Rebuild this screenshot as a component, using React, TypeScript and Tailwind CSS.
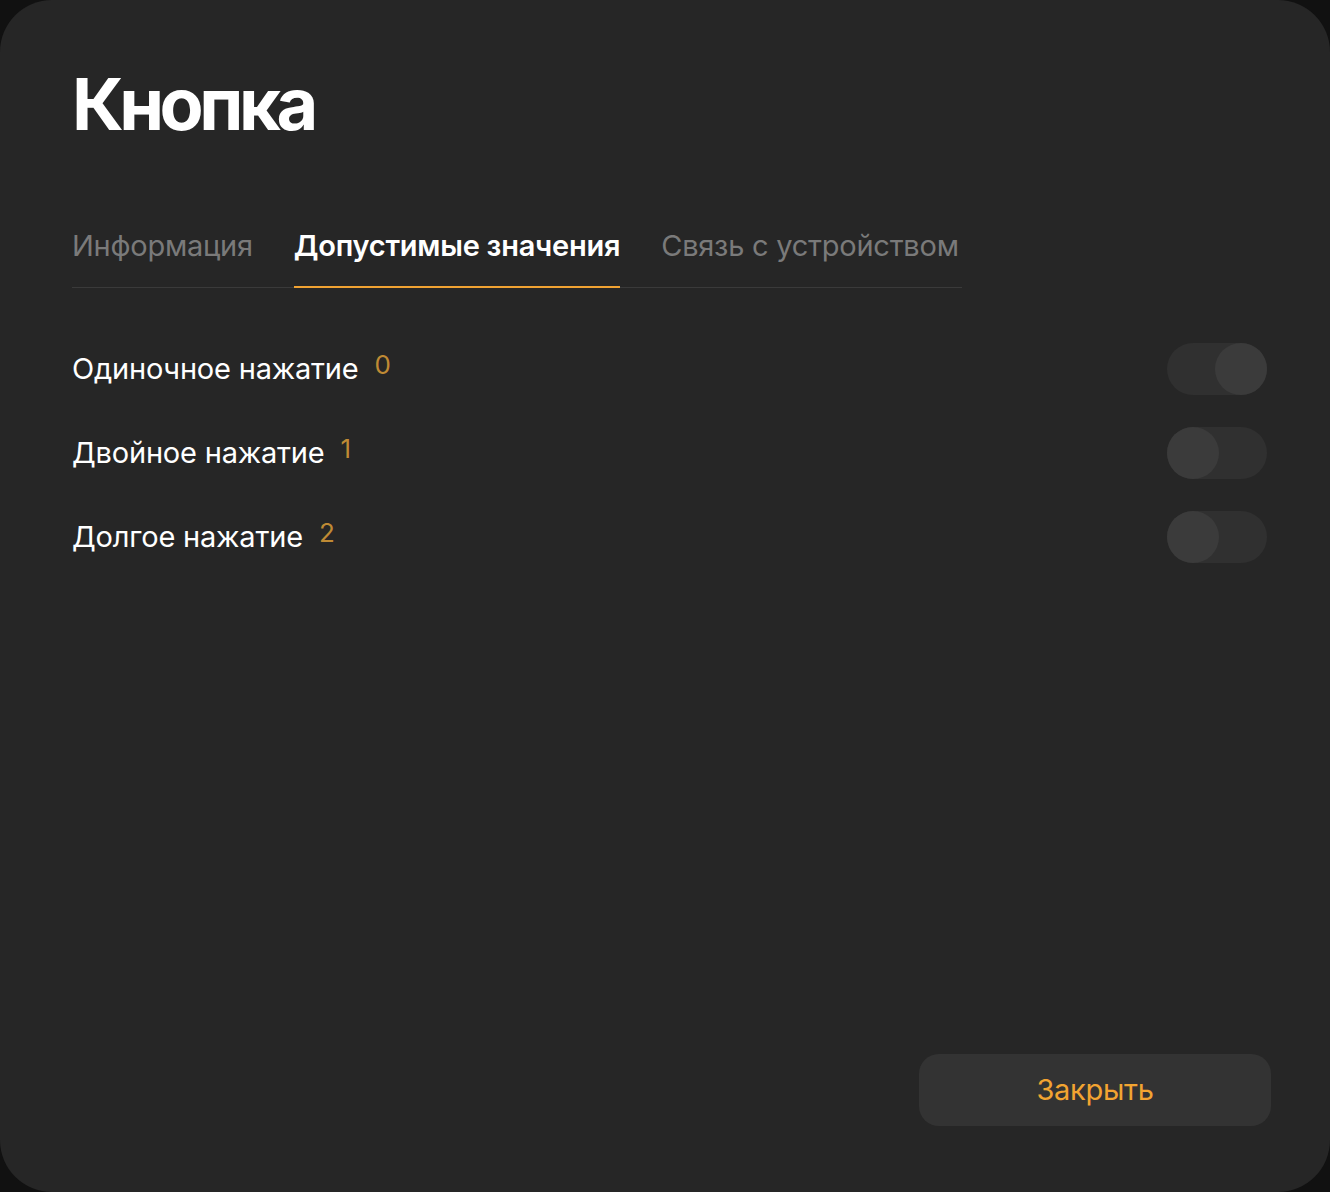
import { useState } from "react";

const tabs = ["Информация", "Допустимые значения", "Связь с устройством"];

const rows = [
  { label: "Одиночное нажатие", value: 0, on: true },
  { label: "Двойное нажатие", value: 1, on: false },
  { label: "Долгое нажатие", value: 2, on: false },
];

function Toggle({ on }: { on: boolean }) {
  return (
    <div className={`flex h-[52px] w-[100px] rounded-full bg-[#303030] ${on ? "justify-end" : "justify-start"}`}>
      <div className="h-[52px] w-[52px] rounded-full bg-[#3b3b3b]" />
    </div>
  );
}

export default function App() {
  const [active] = useState(1);
  return (
    <div className="min-h-screen bg-[#111111]" style={{ fontFamily: "Inter, 'Noto Sans', sans-serif" }}>
      <div className="flex h-[1192px] w-[1330px] flex-col rounded-[52px] bg-[#262626] pl-[72px] pr-[59px] pt-[68px] pb-[66px]">
        <h1 className="text-[72px] font-bold leading-[72px] tracking-[-4.5px] text-white">Кнопка</h1>

        <div className="mt-[88px] flex w-[890px] gap-[41px] border-b border-[#3a3a3a]">
          {tabs.map((t, i) => (
            <div
              key={t}
              className={`shrink-0 whitespace-nowrap pb-[22px] text-[29px] leading-[36px] tracking-[-0.25px] ${
                i === active ? "-mb-px border-b-2 border-[#f0a232] font-semibold text-white" : "text-[#7a7a7a]"
              }`}
            >
              {t}
            </div>
          ))}
        </div>

        <div className="mt-[55px] flex flex-col gap-[32px]">
          {rows.map((r) => (
            <div key={r.label} className="flex items-center justify-between pr-[4px]">
              <div className="flex items-start gap-[16px]">
                <span className="whitespace-nowrap text-[29px] leading-[36px] tracking-[-0.2px] text-white">{r.label}</span>
                <span className="-mt-[4px] text-[26px] leading-[36px] text-[#bf8a34]">{r.value}</span>
              </div>
              <Toggle on={r.on} />
            </div>
          ))}
        </div>

        <div className="mt-auto flex justify-end">
          <button className="h-[72px] w-[352px] rounded-[20px] bg-[#333333] text-[29px] tracking-[-0.3px] text-[#f2a431]">
            Закрыть
          </button>
        </div>
      </div>
    </div>
  );
}
